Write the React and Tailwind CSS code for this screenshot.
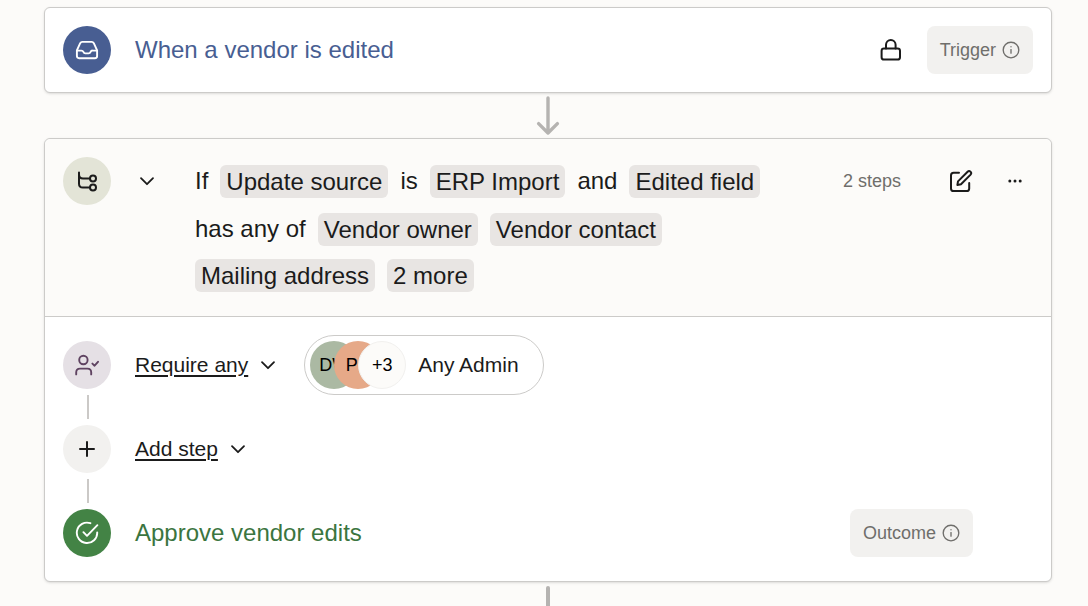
const conditions = [
  { text: "If" },
  { text: "Update source", chip: true },
  { text: "is" },
  { text: "ERP Import", chip: true },
  { text: "and" },
  { text: "Edited field", chip: true },
  { text: "has any of" },
  { text: "Vendor owner", chip: true },
  { text: "Vendor contact", chip: true },
  { text: "Mailing address", chip: true },
  { text: "2 more", chip: true },
];

function Icon({ className = "size-6", width = 1.5, children }) {
  return (
    <svg
      viewBox="0 0 24 24"
      fill="none"
      stroke="currentColor"
      strokeWidth={width}
      strokeLinecap="round"
      strokeLinejoin="round"
      className={`shrink-0 ${className}`}
      aria-hidden="true"
    >
      {children}
    </svg>
  );
}

function InboxIcon() {
  return (
    <Icon width={1.9}>
      <path d="M1.9 12.4 5.2 5.2Q5.9 3.9 7.2 3.9H16.8Q18.1 3.9 18.8 5.2L22.1 12.4V18Q22.1 20.2 19.9 20.2H4.1Q1.9 20.2 1.9 18Z" />
      <path d="M1.9 12.6H6.4Q7.8 12.6 8.4 13.9T10.4 15.4H13.6Q15 15.4 15.6 13.9T17.6 12.6H22.1" />
    </Icon>
  );
}

function BranchIcon() {
  return (
    <Icon width={2}>
      <path d="M4 3.4V14.8Q4 18.6 7.8 18.6H14.8M4 5.2Q4 9.5 8 9.5H14.8" />
      <circle cx="18" cy="9.5" r="3" />
      <circle cx="18" cy="18.6" r="3" />
    </Icon>
  );
}

function LockIcon() {
  return (
    <Icon width={2}>
      <rect x="2.6" y="10.4" width="18.4" height="11.2" rx="2.4" />
      <path d="M7 10.4V6.8a4.8 4.8 0 0 1 9.6 0v3.6" />
    </Icon>
  );
}

function EditIcon() {
  return (
    <Icon width={2}>
      <path d="M10 3.8H4.6Q2 3.8 2 6.4V19.4Q2 22 4.6 22H17.6Q20.2 22 20.2 19.4V14" />
      <path d="M8.4 16 9 12.4 18.6 2.8Q20 1.4 21.5 2.7T21.6 5.6L12 15.2Z" />
    </Icon>
  );
}

function UserCheckIcon() {
  return (
    <Icon width={1.9}>
      <circle cx="8.4" cy="7" r="4.2" />
      <path d="M1.2 21.4V19.4Q1.2 15.6 5 15.6H12.4Q16.2 15.6 16.2 19.4V21.4M17.4 10.6l2.2 2.1L23 8.8" />
    </Icon>
  );
}

function ApproveIcon() {
  return (
    <Icon width={1.9}>
      <path d="M15.4 2.2A10.2 10.2 0 1 0 22.2 11.4" />
      <path d="M8.4 11.2l3.6 3.6L22.4 4.2" />
    </Icon>
  );
}

function InfoIcon() {
  return (
    <Icon className="size-[18px]" width={1.8}>
      <circle cx="12" cy="12" r="10.4" />
      <path d="M12 11.4v4.8" />
      <path d="M12 7.6v.2" />
    </Icon>
  );
}

function Chevron() {
  return (
    <Icon width={1.8}>
      <path d="M6 9.2l6 6 6-6" />
    </Icon>
  );
}

function Badge({ className, children }) {
  return (
    <span className={`flex size-12 shrink-0 items-center justify-center rounded-full ${className}`}>
      {children}
    </span>
  );
}

function InfoButton({ label }) {
  return (
    <button className="flex h-12 shrink-0 items-center gap-1.5 rounded-lg bg-[#f2f1ef] px-[13px] text-lg text-[#6f6e6b]">
      {label}
      <InfoIcon />
    </button>
  );
}

function Connector() {
  return <div className="my-1.5 ml-6 h-6 w-0.5 bg-[#cbc9c7]" />;
}

function StepMenu({ label }) {
  return (
    <button className="flex items-center gap-2 text-[21px] leading-8">
      <span className="underline decoration-2 underline-offset-3">{label}</span>
      <Chevron />
    </button>
  );
}

export default function App() {
  return (
    <main className="min-h-screen overflow-hidden bg-[#fcfbf9] pt-[7px] pr-9 pl-11 font-['Liberation_Sans',Arial,sans-serif] text-[#1b1b1b]">
      <section className="flex items-center rounded-md border border-[#cccbc9] bg-white p-[18px] shadow-sm">
        <Badge className="bg-[#485e92] text-white">
          <InboxIcon />
        </Badge>
        <h2 className="ml-6 flex-1 text-2xl text-[#485e92]">When a vendor is edited</h2>
        <span className="mr-6">
          <LockIcon />
        </span>
        <InfoButton label="Trigger" />
      </section>

      <div className="flex h-[45px] justify-center pt-[3px]">
        <svg width="24" height="40" viewBox="0 0 24 40" fill="none" stroke="#b5b3b1" strokeWidth="3.4" strokeLinecap="round" strokeLinejoin="round" aria-hidden="true">
          <path d="M12 2V37M2.6 27.6l9.4 9.4 9.4-9.4" />
        </svg>
      </div>

      <section className="rounded-md border border-[#cccbc9] bg-white shadow-sm">
        <header className="flex items-start rounded-t-md border-b border-[#cccbc9] bg-[#fcfbf9] pt-[18px] pr-6 pb-6 pl-[18px]">
          <Badge className="bg-[#e3e4d7]">
            <BranchIcon />
          </Badge>
          <button aria-label="Collapse" className="flex h-12 w-18 items-center justify-center">
            <Chevron />
          </button>
          <div className="mt-1.5 mr-6 ml-3 flex flex-1 flex-wrap items-center gap-3 text-2xl leading-9">
            {conditions.map((c) =>
              c.chip ? (
                <span key={c.text} className="rounded-md bg-[#e8e5e3] px-1.5 leading-[33px]">
                  {c.text}
                </span>
              ) : (
                <span key={c.text}>{c.text}</span>
              )
            )}
          </div>
          <div className="flex h-12 items-center">
            <span className="text-lg text-[#6f6e6b]">2 steps</span>
            <button aria-label="Edit condition" className="ml-12">
              <EditIcon />
            </button>
            <button aria-label="More options" className="ml-[30px]">
              <svg viewBox="0 0 24 24" fill="currentColor" className="size-6" aria-hidden="true">
                <circle cx="6.8" cy="12" r="1.5" />
                <circle cx="12" cy="12" r="1.5" />
                <circle cx="17.2" cy="12" r="1.5" />
              </svg>
            </button>
          </div>
        </header>

        <div className="px-[18px] py-6">
          <div className="flex h-12 items-center">
            <Badge className="bg-[#e5e0e5] text-[#5f4361]">
              <UserCheckIcon />
            </Badge>
            <div className="ml-6">
              <StepMenu label="Require any" />
            </div>
            <button className="ml-6 flex h-15 items-center rounded-full border border-[#cccbc9] pr-6 pl-[5px] text-[21px]">
              <span className="flex -space-x-6 text-lg text-black">
                <Badge className="bg-[#abb9a3]">DW</Badge>
                <Badge className="bg-[#e6a988]">PC</Badge>
                <Badge className="border border-[#f2f1ef] bg-[#fcfbf9]">+3</Badge>
              </span>
              <span className="ml-3">Any Admin</span>
            </button>
          </div>
          <Connector />
          <div className="flex items-center">
            <Badge className="bg-[#f2f1ef]">
              <Icon width={2}>
                <path d="M12 5v14M5 12h14" />
              </Icon>
            </Badge>
            <div className="ml-6">
              <StepMenu label="Add step" />
            </div>
          </div>
          <Connector />
          <div className="flex items-center pr-15">
            <Badge className="bg-[#438345] text-white">
              <ApproveIcon />
            </Badge>
            <h2 className="ml-6 flex-1 text-2xl text-[#3b7540]">Approve vendor edits</h2>
            <InfoButton label="Outcome" />
          </div>
        </div>
      </section>

      <div className="mx-auto mt-1 h-6 w-1 rounded-t-sm bg-[#b5b3b1]" />
    </main>
  );
}
